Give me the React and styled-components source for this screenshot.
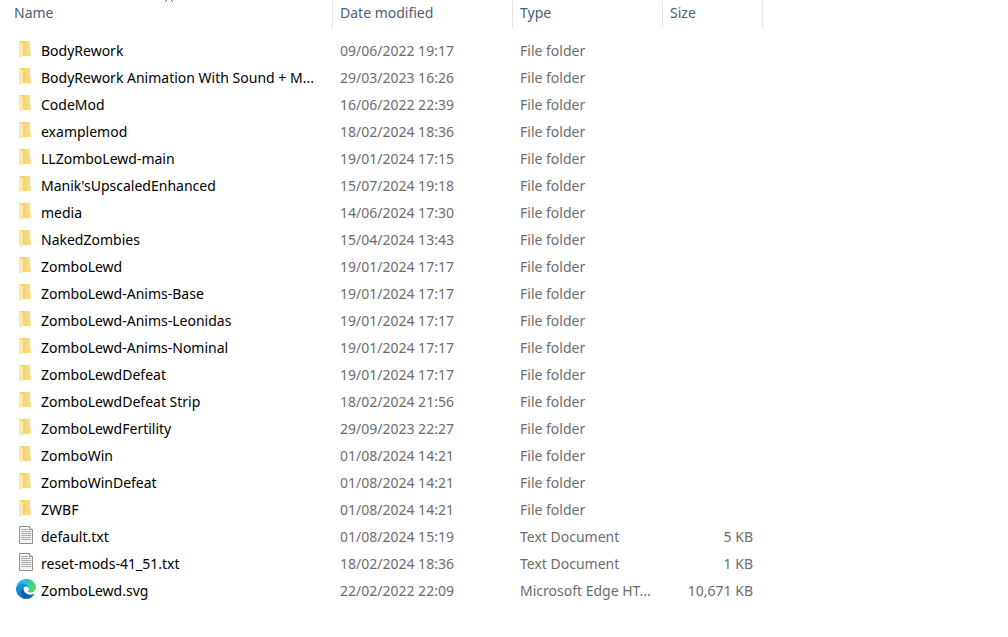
import React from "react";
import styled, { createGlobalStyle } from "styled-components";

const GlobalStyle = createGlobalStyle`
  body {
    margin: 0;
    background: #fff;
    font-family: "Noto Sans", "Open Sans", sans-serif;
    font-size: 14px;
  }
`;

const FileTable = styled.table`
  width: 100%;
  table-layout: fixed;
  border-collapse: separate;
  border-spacing: 0;
`;

const Column = styled.col`
  width: ${({ $width }) => ($width ? `${$width}px` : "auto")};
`;

const HeaderCell = styled.th`
  position: relative;
  height: 28px;
  padding: 0;
  border-right: 1px solid #e5e5e5;
  vertical-align: top;
`;

const HeaderButton = styled.button`
  display: block;
  width: 100%;
  padding: 0 0 0 ${({ $first }) => ($first ? "14px" : "7px")};
  border: 0;
  background: none;
  color: #4c607a;
  font: inherit;
  font-weight: 400;
  line-height: 26px;
  text-align: left;
`;

const SortArrow = styled.svg`
  position: absolute;
  top: 0;
  left: 50%;
  width: 8px;
  height: 3px;
  margin-left: -1px;
`;

const Rows = styled.tbody`
  &::before {
    content: "";
    display: block;
    height: 9px;
  }
`;

const Cell = styled.td`
  height: 27px;
  padding: 0 10px 0 7px;
  color: #6d6d6d;
  line-height: 27px;
  text-align: ${({ $right }) => ($right ? "right" : "left")};
  white-space: nowrap;
`;

const NameCell = styled(Cell)`
  padding: 0 0 0 16px;
  color: #000;
`;

const FileName = styled.div`
  display: flex;
  align-items: center;
  gap: 5px;
  height: 27px;
`;

const Icon = styled.svg`
  flex: none;
  width: 20px;
  height: 20px;
  margin-bottom: 3px;
`;

const FolderIcon = () => (
  <Icon viewBox="0 0 20 20" aria-hidden="true">
    <defs>
      <linearGradient id="folder" x1="0" x2="1">
        <stop offset="0" stopColor="#efca67" />
        <stop offset="1" stopColor="#fddf87" />
      </linearGradient>
    </defs>
    <path d="M3 2h11v9.500l1 1V17H5z" fill="url(#folder)" />
    <path d="M3 2l4 2.500V16l-1 3-3-1.500z" fill="#ffe9a9" />
  </Icon>
);

const TextIcon = () => (
  <Icon viewBox="0 0 20 20" aria-hidden="true">
    <path d="M3.500 1.500h10l3 3v14h-13z" fill="#f5f5f5" stroke="#909090" />
    <path d="M13.500 1.500v3h3" fill="#fff" stroke="#909090" />
    <path d="M5 4.500h7M5 6.500h10M5 8.500h10M5 10.500h10M5 12.500h10M5 14.500h10" stroke="#ababab" />
  </Icon>
);

const EdgeIcon = () => (
  <Icon viewBox="0 0 256 256" aria-hidden="true">
    <defs>
      <linearGradient id="edgeBase" x1="0" y1="0" x2="1" y2="0">
        <stop offset="0" stopColor="#0c59a4" />
        <stop offset="1" stopColor="#1562ad" />
      </linearGradient>
      <linearGradient id="edgeMid" x1="0" y1="0" x2="0.3" y2="1">
        <stop offset="0" stopColor="#1b9de2" />
        <stop offset="1" stopColor="#0f74d0" />
      </linearGradient>
      <linearGradient id="edgeTop" x1="0" y1="0.3" x2="1" y2="0.5">
        <stop offset="0" stopColor="#2fb4ea" />
        <stop offset="0.5" stopColor="#2cc0cf" />
        <stop offset="1" stopColor="#66dc50" />
      </linearGradient>
    </defs>
    <path d="M231 190a94 94 0 0 1-10 5 102 102 0 0 1-36 6c-48 0-89-33-89-75a32 32 0 0 1 17-27c-43 2-54 47-54 73 0 74 68 82 83 82 8 0 20-2 27-5a128 128 0 0 0 66-53 4 4 0 0 0-4-6z" fill="url(#edgeBase)" />
    <path d="M106 241a79 79 0 0 1-23-21 81 81 0 0 1 29-121c4-2 9-4 17-4a34 34 0 0 1 26 13 34 34 0 0 1 7 19c0 0 26-80-81-80-45 0-81 43-81 80a129 129 0 0 0 12 56 128 128 0 0 0 156 67 75 75 0 0 1-62-9z" fill="url(#edgeMid)" />
    <path d="M152 149c-1 1-3 3-3 6 0 3 2 6 5 8 15 10 42 9 42 9a61 61 0 0 0 31-9 63 63 0 0 0 30-54c0-22-8-36-11-43C226 26 183 1 136 1A128 128 0 0 0 0 127c1-36 37-66 81-66 4 0 24 0 43 10 17 9 26 19 32 30 7 12 8 26 8 32 0 6-3 14-12 22z" fill="url(#edgeTop)" />
  </Icon>
);

const icons = { folder: FolderIcon, text: TextIcon, edge: EdgeIcon };

const columns = ["Name", "Date modified", "Type", "Size"];

const folder = (name, date) => ({ name, date, type: "File folder", size: "", icon: "folder" });

const files = [
  folder("BodyRework", "09/06/2022 19:17"),
  folder("BodyRework Animation With Sound + M...", "29/03/2023 16:26"),
  folder("CodeMod", "16/06/2022 22:39"),
  folder("examplemod", "18/02/2024 18:36"),
  folder("LLZomboLewd-main", "19/01/2024 17:15"),
  folder("Manik'sUpscaledEnhanced", "15/07/2024 19:18"),
  folder("media", "14/06/2024 17:30"),
  folder("NakedZombies", "15/04/2024 13:43"),
  folder("ZomboLewd", "19/01/2024 17:17"),
  folder("ZomboLewd-Anims-Base", "19/01/2024 17:17"),
  folder("ZomboLewd-Anims-Leonidas", "19/01/2024 17:17"),
  folder("ZomboLewd-Anims-Nominal", "19/01/2024 17:17"),
  folder("ZomboLewdDefeat", "19/01/2024 17:17"),
  folder("ZomboLewdDefeat Strip", "18/02/2024 21:56"),
  folder("ZomboLewdFertility", "29/09/2023 22:27"),
  folder("ZomboWin", "01/08/2024 14:21"),
  folder("ZomboWinDefeat", "01/08/2024 14:21"),
  folder("ZWBF", "01/08/2024 14:21"),
  { name: "default.txt", date: "01/08/2024 15:19", type: "Text Document", size: "5 KB", icon: "text" },
  { name: "reset-mods-41_51.txt", date: "18/02/2024 18:36", type: "Text Document", size: "1 KB", icon: "text" },
  { name: "ZomboLewd.svg", date: "22/02/2022 22:09", type: "Microsoft Edge HT...", size: "10,671 KB", icon: "edge" },
];

const FileRow = ({ file }) => {
  const FileIcon = icons[file.icon];
  return (
    <tr>
      <NameCell>
        <FileName>
          <FileIcon />
          {file.name}
        </FileName>
      </NameCell>
      <Cell>{file.date}</Cell>
      <Cell>{file.type}</Cell>
      <Cell $right>{file.size}</Cell>
    </tr>
  );
};

const App = () => {
  return (
    <>
      <GlobalStyle />
      <FileTable>
        <colgroup>
          <Column $width={333} />
          <Column $width={180} />
          <Column $width={150} />
          <Column $width={100} />
          <Column />
        </colgroup>
        <thead>
          <tr>
            {columns.map((label, index) => (
              <HeaderCell key={label} scope="col" aria-sort={index === 0 ? "ascending" : undefined}>
                <HeaderButton type="button" $first={index === 0}>{label}</HeaderButton>
                {index === 0 && (
                  <SortArrow viewBox="0 0 8 3" aria-hidden="true">
                    <path d="M0 2L4-2L8 2" fill="none" stroke="#6d6d6d" />
                  </SortArrow>
                )}
              </HeaderCell>
            ))}
          </tr>
        </thead>
        <Rows>
          {files.map((file) => (
            <FileRow key={file.name} file={file} />
          ))}
        </Rows>
      </FileTable>
    </>
  );
};

export default App;
